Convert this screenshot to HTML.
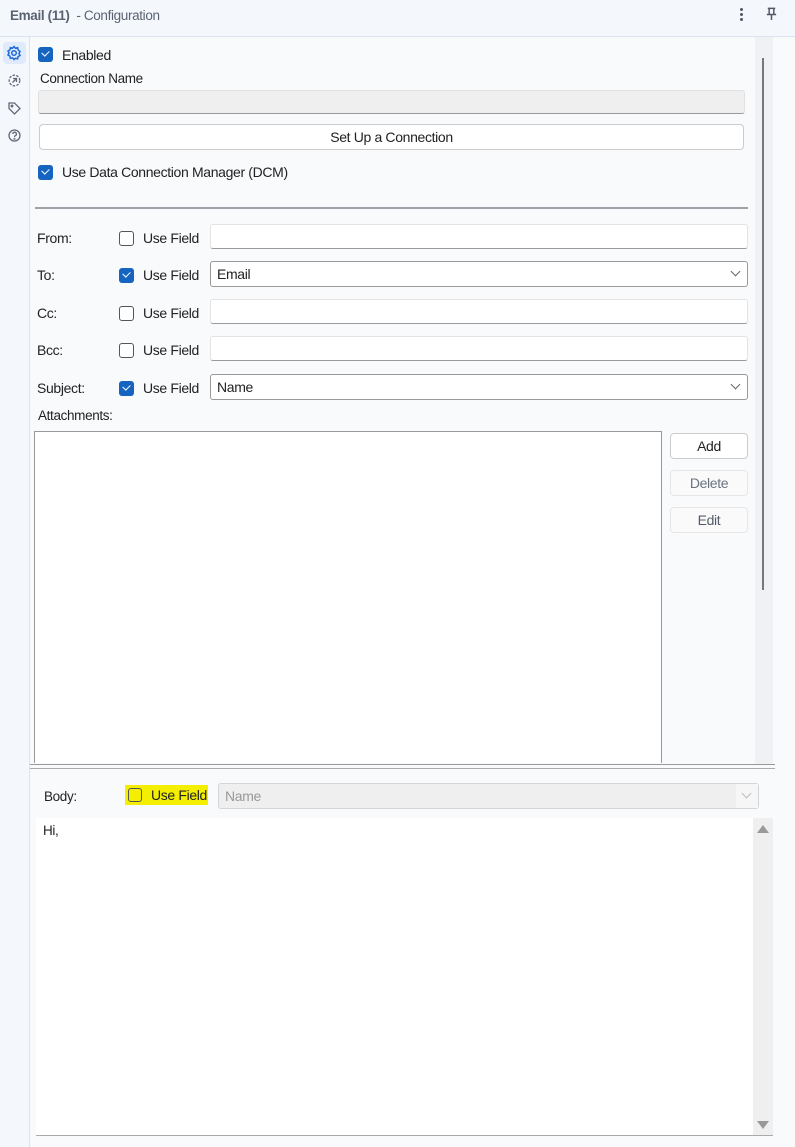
<!DOCTYPE html>
<html><head><meta charset="utf-8"><style>
*{box-sizing:border-box;margin:0;padding:0}
body{width:795px;height:1147px;background:#f9fafc;font-family:"Liberation Sans",sans-serif;font-size:14px;color:#222;position:relative;overflow:hidden;letter-spacing:-0.35px}
.a{position:absolute}
.hdr{left:0;top:0;width:795px;height:37px;background:#f4f7fc;border-bottom:1px solid #dde3ee}
.side{left:0;top:37px;width:30px;height:1110px;background:#f4f7fc;border-right:1px solid #dfe4ec}
.cb{position:absolute;width:15px;height:15px;border-radius:3px;background:#1565c0}
.cb::after{content:"";position:absolute;left:4px;top:3px;width:6px;height:4px;border-left:1.5px solid #fff;border-bottom:1.5px solid #fff;transform:rotate(-45deg)}
.cbo{position:absolute;width:15px;height:15px;border-radius:3px;border:1.3px solid #555;background:#fff}
.inp{position:absolute;background:#fff;border:1px solid #e3e3e3;border-bottom:1.5px solid #9a9a9a;border-radius:3px}
.chev{position:absolute;right:8px;top:6px;width:7px;height:7px;border-right:1.3px solid #666;border-bottom:1.3px solid #666;transform:rotate(45deg)}
.btn{position:absolute;background:#fafafa;border:1px solid #ddd;border-radius:4px;text-align:center;font-size:14px}
</style></head><body>
<div class="a hdr"></div>
<div class="a" style="left:10px;top:8px;font-size:13.5px;color:#5b6271"><b>Email (11)</b>&nbsp; - Configuration</div>
<div class="a" style="left:740px;top:8px;width:3px;height:14px">
<div style="width:3px;height:3px;background:#556;border-radius:50%;margin-bottom:2px"></div><div style="width:3px;height:3px;background:#556;border-radius:50%;margin-bottom:2px"></div><div style="width:3px;height:3px;background:#556;border-radius:50%"></div></div>
<svg class="a" style="left:765px;top:6px" width="13" height="16" viewBox="0 0 14 16" fill="none" stroke="#556" stroke-width="1.6"><path d="M3 2h8M4.5 2v6M9.5 2v6M2 8.5h10M7 8.5v6"/></svg>
<div class="a side"></div>
<div class="a" style="left:3px;top:42px;width:23px;height:22px;background:#dfeafc;border-radius:4px"></div>
<svg class="a" style="left:6px;top:45px" width="16" height="16" viewBox="0 0 16 16" fill="none" stroke="#1e6ad6" stroke-width="1.5"><circle cx="8" cy="8" r="2.3"/><path d="M8 1.5l1.4 1.7 2.2-.5.5 2.2L14 6.5 13 8.5l1 2-1.9 1.1-.5 2.2-2.2-.5L8 14.5l-1.4-1.7-2.2.5-.5-2.2L2 10l1-2-1-2 1.9-1.1.5-2.2 2.2.5z"/></svg>
<svg class="a" style="left:8px;top:74px" width="13" height="13" viewBox="0 0 13 13" fill="none" stroke="#667" stroke-width="1.3"><circle cx="6.5" cy="6.5" r="5.3" stroke-dasharray="2.5 1.3"/><path d="M4.5 8.5l4-4M5 4.5h3.5V8"/></svg>
<svg class="a" style="left:7px;top:101px" width="15" height="15" viewBox="0 0 15 15" fill="none" stroke="#667" stroke-width="1.3"><path d="M2 2h5.5l5.5 5.5-5.5 5.5L2 7.5z"/><circle cx="5" cy="5" r="0.8"/></svg>
<svg class="a" style="left:8px;top:129px" width="13" height="13" viewBox="0 0 13 13" fill="none" stroke="#667" stroke-width="1.3"><circle cx="6.5" cy="6.5" r="5.5"/><path d="M4.8 5a1.8 1.8 0 1 1 2.4 1.7c-.6.3-.7.7-.7 1.3"/><circle cx="6.5" cy="9.8" r=".4"/></svg>

<div class="a" style="left:755px;top:37px;width:18px;height:727px;background:#eff1f4"></div>
<div class="a" style="left:762px;top:58px;width:2px;height:532px;background:#777"></div>

<div class="cb" style="left:38px;top:47px"></div>
<div class="a" style="left:62px;top:47px">Enabled</div>
<div class="a" style="left:40px;top:71px;font-size:13.5px">Connection Name</div>
<div class="a" style="left:38px;top:90px;width:707px;height:24px;background:#efefef;border:1px solid #e0e0e0;border-bottom:1.5px solid #999;border-radius:3px"></div>
<div class="btn" style="left:39px;top:124px;width:705px;height:26px;line-height:25px;background:#fff;border-color:#ccc">Set Up a Connection</div>
<div class="cb" style="left:38px;top:165px"></div>
<div class="a" style="left:62px;top:164px">Use Data Connection Manager (DCM)</div>
<div class="a" style="left:35px;top:207px;width:713px;height:2px;background:#9ea2a8"></div>

<div class="a" style="left:37px;top:230px">From:</div>
<div class="cbo" style="left:119px;top:231px"></div><div class="a" style="left:143px;top:230px">Use Field</div>
<div class="inp" style="left:210px;top:224px;width:538px;height:25px"></div>

<div class="a" style="left:37px;top:267px">To:</div>
<div class="cb" style="left:119px;top:268px"></div><div class="a" style="left:143px;top:267px">Use Field</div>
<div class="inp" style="left:210px;top:261px;width:538px;height:26px;border:1px solid #999"><span style="position:absolute;left:6px;top:4px">Email</span><div class="chev"></div></div>

<div class="a" style="left:37px;top:305px">Cc:</div>
<div class="cbo" style="left:119px;top:306px"></div><div class="a" style="left:143px;top:305px">Use Field</div>
<div class="inp" style="left:210px;top:299px;width:538px;height:25px"></div>

<div class="a" style="left:37px;top:342px">Bcc:</div>
<div class="cbo" style="left:119px;top:343px"></div><div class="a" style="left:143px;top:342px">Use Field</div>
<div class="inp" style="left:210px;top:336px;width:538px;height:25px"></div>

<div class="a" style="left:37px;top:380px">Subject:</div>
<div class="cb" style="left:119px;top:381px"></div><div class="a" style="left:143px;top:380px">Use Field</div>
<div class="inp" style="left:210px;top:374px;width:538px;height:26px;border:1px solid #999"><span style="position:absolute;left:6px;top:4px">Name</span><div class="chev"></div></div>

<div class="a" style="left:38px;top:408px;font-size:13.5px">Attachments:</div>
<div class="a" style="left:34px;top:431px;width:628px;height:332px;background:#fff;border:1px solid #999;border-bottom:none"></div>
<div class="btn" style="left:670px;top:433px;width:78px;height:26px;line-height:25px;background:#fff;border-color:#ccc">Add</div>
<div class="btn" style="left:670px;top:470px;width:78px;height:26px;line-height:25px;color:#6b7380;border-color:#e6e6e6">Delete</div>
<div class="btn" style="left:670px;top:507px;width:78px;height:26px;line-height:25px;color:#555d6a;border-color:#e6e6e6">Edit</div>

<div class="a" style="left:30px;top:764px;width:745px;height:1px;background:#999"></div>
<div class="a" style="left:30px;top:768px;width:745px;height:1px;background:#aaa"></div>

<div class="a" style="left:44px;top:789px;font-size:13.5px">Body:</div>
<div class="a" style="left:125px;top:785px;width:83px;height:20px;background:#f4ee00"></div>
<div class="a" style="left:128px;top:788px;width:14px;height:14px;border:1.3px solid #555;border-radius:3px"></div>
<div class="a" style="left:151px;top:787px">Use Field</div>
<div class="a" style="left:218px;top:783px;width:541px;height:26px;background:#efefef;border:1px solid #d5d5d5;border-radius:3px"><span style="position:absolute;left:6px;top:4px;color:#999">Name</span><div style="position:absolute;right:0;top:0;width:22px;height:24px;background:#f6f6f6"></div><div class="chev" style="border-color:#bbb"></div></div>

<div class="a" style="left:36px;top:818px;width:737px;height:318px;background:#fff;border-bottom:1.5px solid #aaa"></div>
<div class="a" style="left:43px;top:823px;font-size:13.5px">Hi,</div>
<div class="a" style="left:753px;top:818px;width:20px;height:317px;background:#efefef"></div>
<div class="a" style="left:757px;top:825px;width:0;height:0;border-left:6px solid transparent;border-right:6px solid transparent;border-bottom:8px solid #999"></div>
<div class="a" style="left:757px;top:1121px;width:0;height:0;border-left:6px solid transparent;border-right:6px solid transparent;border-top:8px solid #999"></div>
</body></html>
